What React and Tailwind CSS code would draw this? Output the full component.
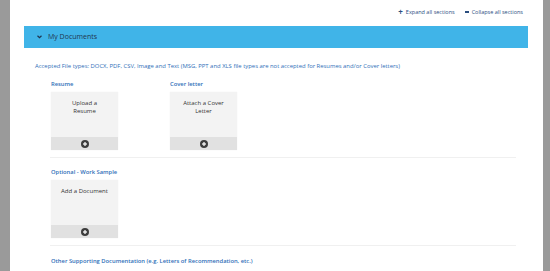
import React from "react";

const PlusCircle = () => (
  <svg width="8" height="8" viewBox="0 0 16 16">
    <circle cx="8" cy="8" r="8" fill="#3d3d3d" />
    <rect x="4" y="6.8" width="8" height="2.4" fill="#fff" />
    <rect x="6.8" y="4" width="2.4" height="8" fill="#fff" />
  </svg>
);

const UploadCard = ({ lines }) => (
  <div className="w-[67px] h-[58px] bg-[#f3f3f3] flex flex-col shadow-[0_0_1px_rgba(0,0,0,0.08)]">
    <div className="flex-1 pt-[8px] text-center text-[6px] leading-[7.5px] text-[#333]">
      {lines.map((l) => (
        <div key={l}>{l}</div>
      ))}
    </div>
    <div className="h-[13px] bg-[#e1e1e1] flex items-center justify-center">
      <PlusCircle />
    </div>
  </div>
);

const Slot = ({ label, lines }) => (
  <div className="flex flex-col">
    <div className="h-[10px] mb-[3px] text-[5.8px] leading-[10px] font-semibold text-[#2f6fb8]">{label}</div>
    <UploadCard lines={lines} />
  </div>
);

export default function App() {
  return (
    <div
      className="w-[550px] h-[271px] bg-[#9a9a9a] flex overflow-hidden"
      style={{ fontFamily: '"Open Sans", "Liberation Sans", sans-serif' }}
    >
      <div className="ml-[10px] w-[533px] h-full bg-white pl-[14px] pr-[15px]">
        {/* Section toggles */}
        <div className="h-[26px] flex items-center justify-end gap-[10px] pr-[5px] pb-[2px] text-[5.5px] text-[#2a4d7f]">
          <span className="flex items-center gap-[3px]">
            <span className="text-[8px] font-bold leading-none">+</span>Expand all sections
          </span>
          <span className="flex items-center gap-[3px]">
            <span className="w-[4px] h-[1.5px] bg-[#2a4d7f]" />Collapse all sections
          </span>
        </div>

        {/* Section header */}
        <div className="h-[22px] bg-[#40b4e8] flex items-center pl-[13px] gap-[6px]">
          <svg width="5" height="4" viewBox="0 0 10 8">
            <path d="M1 1.5 L5 5.5 L9 1.5" stroke="#1f3550" strokeWidth="2.4" fill="none" />
          </svg>
          <span className="text-[7px] text-[#22374f]">My Documents</span>
        </div>

        <div className="pl-[11px]">
          <p className="mt-[14px] text-[5.9px] leading-[8px] text-[#2f6fb8]">
            Accepted File types: DOCX, PDF, CSV, Image and Text (MSG, PPT and XLS file types are not accepted for Resumes and/or Cover letters)
          </p>

          <div className="pl-[15px] pr-[12px]">
            <div className="mt-[9px] pl-[1px] flex gap-[52px]">
              <Slot label="Resume" lines={["Upload a", "Resume"]} />
              <Slot label="Cover letter" lines={["Attach a Cover", "Letter"]} />
            </div>
            <div className="mt-[7px] h-px bg-[#f0f0f0]" />

            <div className="mt-[9px] pl-[1px] flex">
              <Slot label="Optional - Work Sample" lines={["Add a Document"]} />
            </div>
            <div className="mt-[7px] h-px bg-[#f0f0f0]" />

            <div className="mt-[10px] pl-[1px] text-[5.8px] leading-[10px] font-semibold text-[#2f6fb8]">
              Other Supporting Documentation (e.g. Letters of Recommendation, etc.)
            </div>
          </div>
        </div>
      </div>
    </div>
  );
}
